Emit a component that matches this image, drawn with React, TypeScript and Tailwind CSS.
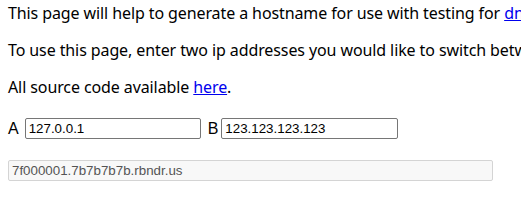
import { useState } from "react"

function toHex(ip: string) {
  const parts = ip.split(".").map(p => parseInt(p, 10))
  if (parts.length !== 4 || parts.some(n => isNaN(n) || n < 0 || n > 255)) return "invalid"
  return parts.map(n => n.toString(16).padStart(2, "0")).join("")
}

export default function App() {
  const [a, setA] = useState("127.0.0.1")
  const [b, setB] = useState("123.123.123.123")

  const host = `${toHex(a)}.${toHex(b)}.rbndr.us`

  return (
    <div className="w-[521px] h-[204px] overflow-hidden bg-white px-2 pt-[3px] text-black font-['Noto_Sans',sans-serif]">
      <p className="whitespace-nowrap text-[16px] leading-[21px] tracking-[-0.1px] mb-4">
        This page will help to generate a hostname for use with testing for{" "}
        <a href="#" className="text-[#0000ee] underline">dns rebinding vulnerabilities</a> in software.
      </p>
      <p className="whitespace-nowrap text-[16px] leading-[21px] tracking-[-0.1px] mb-4">
        To use this page, enter two ip addresses you would like to switch between.
      </p>
      <p className="whitespace-nowrap text-[16px] leading-[21px] tracking-[-0.1px] mb-4">
        All source code available <a href="#" className="text-[#0000ee] underline">here</a>.
      </p>
      <div className="flex items-center h-[21px] mt-[20px] font-['Liberation_Sans',Arial,sans-serif] text-[16px]">
        <span>A</span>
        <input
          value={a}
          onChange={e => setA(e.target.value)}
          className="ml-[6px] w-[176px] h-[21px] border border-[#767676] rounded-[2px] px-[3px] text-[13.33px] outline-none"
        />
        <span className="ml-[7px]">B</span>
        <input
          value={b}
          onChange={e => setB(e.target.value)}
          className="ml-[3px] w-[177px] h-[21px] border border-[#767676] rounded-[2px] px-[3px] text-[13.33px] outline-none"
        />
      </div>
      <input
        readOnly
        value={host}
        className="block mt-[21px] w-[485px] h-[21px] border border-[#d4d4d4] rounded-[2px] bg-[#f8f8f8] px-[3px] text-[13.33px] text-[#545454] outline-none font-['Liberation_Sans',Arial,sans-serif]"
      />
    </div>
  )
}
